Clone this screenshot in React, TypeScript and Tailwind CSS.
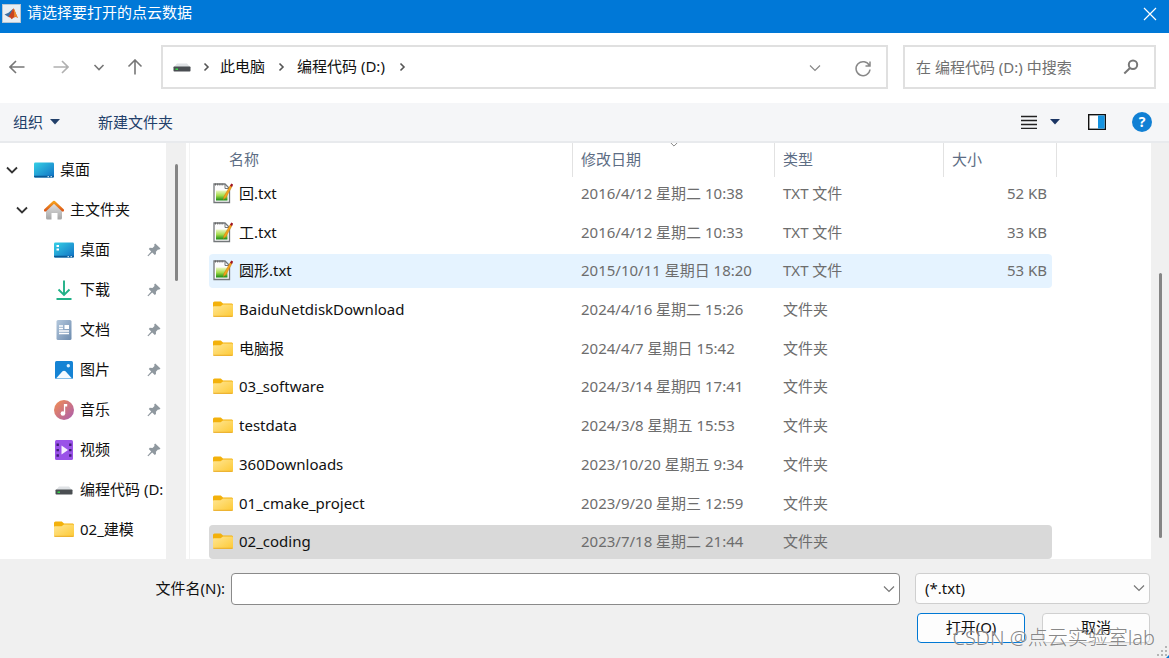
import type { ReactNode } from "react";

type Entry = {
  name: string;
  date: string;
  kind: "txt" | "folder";
  size?: string;
  state?: "hover" | "selected";
};

const entries: Entry[] = [
  { name: "回.txt", date: "2016/4/12 星期二 10:38", kind: "txt", size: "52 KB" },
  { name: "工.txt", date: "2016/4/12 星期二 10:33", kind: "txt", size: "33 KB" },
  { name: "圆形.txt", date: "2015/10/11 星期日 18:20", kind: "txt", size: "53 KB", state: "hover" },
  { name: "BaiduNetdiskDownload", date: "2024/4/16 星期二 15:26", kind: "folder" },
  { name: "电脑报", date: "2024/4/7 星期日 15:42", kind: "folder" },
  { name: "03_software", date: "2024/3/14 星期四 17:41", kind: "folder" },
  { name: "testdata", date: "2024/3/8 星期五 15:53", kind: "folder" },
  { name: "360Downloads", date: "2023/10/20 星期五 9:34", kind: "folder" },
  { name: "01_cmake_project", date: "2023/9/20 星期三 12:59", kind: "folder" },
  { name: "02_coding", date: "2023/7/18 星期二 21:44", kind: "folder", state: "selected" },
];

function MatlabIcon() {
  return (
    <svg width="19" height="19" viewBox="0 0 19 19" aria-hidden="true">
      <rect x="0.5" y="0.5" width="18" height="18" fill="#e9eef3" stroke="#b9c6d2" />
      <path d="M2.5 10.5 6.5 8.8 9 6.500 11.500 4.500 8.500 11 6.500 13Z" fill="#3d6fa3" />
      <path d="M6.300 13 8.800 9 11.300 4.500C12.500 4.500 13.500 9.500 16 14 14 12.300 12.500 12.500 9.700 15.300 8.700 13.700 7.500 13 6.300 13Z" fill="#c9431f" />
      <path d="M11.300 4.500C12.500 4.500 13.500 9.500 16 14 14.300 12.600 13.300 12.300 12 13 12.600 10 12 7.500 11.300 4.500Z" fill="#ee8a2a" />
    </svg>
  );
}

function DriveIcon() {
  return (
    <svg width="20" height="20" viewBox="0 0 20 20" aria-hidden="true">
      <path d="M5 6.5h10L18 10H2Z" fill="#dfe2e5" />
      <rect x="1.5" y="9.5" width="17" height="5" rx="0.8" fill="#4a4e52" />
      <rect x="3.5" y="11.5" width="2.5" height="1.5" fill="#37d94a" />
    </svg>
  );
}

function FolderIcon() {
  return (
    <svg width="20" height="20" viewBox="0 0 20 20" aria-hidden="true">
      <defs>
        <linearGradient id="folder" x1="0" y1="0" x2="1" y2="1">
          <stop offset="0" stopColor="#ffe694" />
          <stop offset="1" stopColor="#fdc934" />
        </linearGradient>
      </defs>
      <path d="M0 3.2C0 2.3.7 1.5 1.6 1.5h6.2L10 3.5h8.4c.9 0 1.6.7 1.6 1.6V9H0Z" fill="#f3b10b" />
      <path d="M0 7.2c0-.6.4-1 1-1h6.6L10 4.6h8.6c.8 0 1.4.6 1.4 1.4v9.6c0 .8-.6 1.4-1.4 1.4H1.4C.6 17 0 16.400 0 15.600Z" fill="url(#folder)" />
      <path d="M.3 16.300h19.400" stroke="#e6a92a" strokeWidth="0.9" />
    </svg>
  );
}

function TextFileIcon() {
  return (
    <svg width="20" height="22" viewBox="0 0 20 22" aria-hidden="true">
      <defs>
        <linearGradient id="sheet" x1="0" y1="0" x2="0" y2="1">
          <stop offset="0" stopColor="#ecf7c4" />
          <stop offset="0.5" stopColor="#a4dc4c" />
          <stop offset="1" stopColor="#188a12" />
        </linearGradient>
      </defs>
      <path d="M1 1h11l4.500 4.500v14H1Z" fill="#fdfdfd" stroke="#73777a" strokeWidth="1.300" />
      <path d="M12 1v4.500h4.500" fill="none" stroke="#73777a" />
      <path d="M2 1.500h9" stroke="#666" strokeWidth="2" strokeDasharray="1 1.200" />
      <rect x="3" y="7.500" width="11.500" height="10" fill="url(#sheet)" />
      <path d="M10.500 16.500 11 13.500 17.200 2.500 19 3.500 13 14.500Z" fill="#f5a31c" stroke="#c97d0c" strokeWidth="0.500" />
      <path d="m17 2.800 1.200-2.300 2 1-1.200 2.400Z" fill="#a01522" />
    </svg>
  );
}

function DesktopIcon({ dots }: { dots?: boolean }) {
  return (
    <svg width="20" height="20" viewBox="0 0 20 20" aria-hidden="true">
      <defs>
        <linearGradient id="screen" x1="0" y1="0" x2="1" y2="1">
          <stop offset="0" stopColor="#35d0e6" />
          <stop offset="1" stopColor="#1070c4" />
        </linearGradient>
      </defs>
      <rect y="2.500" width="20" height="15" rx="1.200" fill="url(#screen)" />
      <path d="M0 15.800h20v.7a1 1 0 0 1-1 1H1a1 1 0 0 1-1-1Z" fill="#0b5a96" />
      <path d="M13.500 16.700h1.500M16.500 16.700H18" stroke="#dff4ff" />
      {dots && <path d="M2.500 6h2.500M2.500 9.500h2.500" stroke="#fff" strokeWidth="2" />}
    </svg>
  );
}

function HomeIcon() {
  return (
    <svg width="20" height="20" viewBox="0 0 20 20" aria-hidden="true">
      <defs>
        <linearGradient id="wall" x1="0" y1="0" x2="0" y2="1">
          <stop offset="0" stopColor="#e4e4e4" />
          <stop offset="1" stopColor="#a6a6a6" />
        </linearGradient>
        <linearGradient id="roof" x1="0" y1="0" x2="0" y2="1">
          <stop offset="0" stopColor="#f6a01c" />
          <stop offset="1" stopColor="#dc5a1a" />
        </linearGradient>
      </defs>
      <path d="M2 9 10 2.500 18 9v9a1.500 1.500 0 0 1-1.500 1.500h-3V13h-6v6.500h-4A1.500 1.500 0 0 1 2 18Z" fill="url(#wall)" />
      <path d="M1.200 10.300 10 2l8.800 8.300" fill="none" stroke="url(#roof)" strokeWidth="2.600" strokeLinecap="round" strokeLinejoin="round" />
    </svg>
  );
}

function DownloadIcon() {
  return (
    <svg width="20" height="20" viewBox="0 0 20 20" fill="none" stroke="#21b187" strokeWidth="1.900" aria-hidden="true">
      <path d="M10 .5v14M4.500 9.500l5.500 5.500 5.500-5.500M2.500 19h15" />
    </svg>
  );
}

function DocumentIcon() {
  return (
    <svg width="20" height="20" viewBox="0 0 20 20" aria-hidden="true">
      <defs>
        <linearGradient id="doc" x1="0" y1="0" x2="1" y2="1">
          <stop offset="0" stopColor="#b4c8dd" />
          <stop offset="1" stopColor="#6c8bae" />
        </linearGradient>
      </defs>
      <rect x="2.500" width="15" height="20" rx="1.500" fill="url(#doc)" />
      <path d="M5 6h4M5 8.500h4M5 11h10M5 13.500h10" stroke="#fff" strokeWidth="1.300" />
      <rect x="10.500" y="5" width="4.500" height="4" fill="#fff" />
    </svg>
  );
}

function PictureIcon() {
  return (
    <svg width="20" height="20" viewBox="0 0 20 20" aria-hidden="true">
      <rect x="1" y="1" width="18" height="18" rx="1.500" fill="#1583d4" />
      <path d="M2 18.500 8.500 11.300q1.500-1.300 3 0L18 18.500Z" fill="#f4faff" />
      <circle cx="14.300" cy="5.700" r="1.700" fill="#dff2ff" />
    </svg>
  );
}

function MusicIcon() {
  return (
    <svg width="20" height="20" viewBox="0 0 20 20" aria-hidden="true">
      <defs>
        <linearGradient id="disc" x1="0" y1="0" x2="1" y2="1">
          <stop offset="0.1" stopColor="#ec8a5a" />
          <stop offset="1" stopColor="#a95bb0" />
        </linearGradient>
      </defs>
      <circle cx="10" cy="10" r="10" fill="url(#disc)" />
      <circle cx="8.900" cy="13.500" r="2.300" fill="#fff" />
      <path d="M9.900 4h3.300v2.500h-2v7H9.900Z" fill="#fff" />
    </svg>
  );
}

function VideoIcon() {
  return (
    <svg width="20" height="20" viewBox="0 0 20 20" aria-hidden="true">
      <rect x="1" width="18" height="20" rx="1.500" fill="#9a52e8" />
      <path d="M3.700 3.500v14M16.300 3.500v14" stroke="#3f1d78" strokeWidth="2.400" strokeDasharray="2.400 3" />
      <path d="M7.500 5.500 14 10l-6.500 4.500Z" fill="#f7f0ff" />
    </svg>
  );
}

function PinIcon() {
  return (
    <svg width="14" height="14" viewBox="0 0 14 14" aria-hidden="true">
      <path d="M8.200.5 13.500 5.500 12 6.700 11 6.600 8.900 8.700 9 11 7.800 12 5.200 9.400 1.300 13.200.4 12.700 4.200 8.500 1.800 6 2.800 4.800 5.500 5 7.500 2.900 7.200 1.500Z" fill="#8f989f" />
    </svg>
  );
}

function Chevron({
  direction,
  size = 12,
  className = "text-[#777]",
  weight = 1.2,
}: {
  direction: "down" | "right";
  size?: number;
  className?: string;
  weight?: number;
}) {
  return (
    <svg width={size} height={size} viewBox="0 0 12 12" fill="none" stroke="currentColor" strokeWidth={weight} className={className} aria-hidden="true">
      <path d={direction === "down" ? "M1 3.500 6 8.500 11 3.500" : "M4.500 2.500 8 6 4.500 9.500"} />
    </svg>
  );
}

function NavButton({ label, faded, path }: { label: string; faded?: boolean; path: string }) {
  return (
    <button type="button" aria-label={label} className={`flex w-4 justify-center ${faded ? "text-[#b0b0b0]" : "text-[#777]"}`}>
      <svg width="16" height="16" viewBox="0 0 16 16" fill="none" stroke="currentColor" strokeWidth="1.600" className="shrink-0">
        <path d={path} />
      </svg>
    </button>
  );
}

function TreeItem({
  label,
  icon,
  indent,
  open,
  pinned,
}: {
  label: string;
  icon: ReactNode;
  indent: string;
  open?: boolean;
  pinned?: boolean;
}) {
  return (
    <li>
      <a href="#" className={`flex h-10 items-center whitespace-nowrap ${indent}`}>
        <span className="w-7 shrink-0">
          {open && <Chevron direction="down" className="text-[#333]" weight={1.8} />}
        </span>
        <span className="mr-1.5 shrink-0">{icon}</span>
        <span className="overflow-hidden pb-0.5">{label}</span>
        {pinned && (
          <span className="mr-0.5 ml-auto">
            <PinIcon />
          </span>
        )}
      </a>
    </li>
  );
}

function FileRow({ entry }: { entry: Entry }) {
  const fill =
    entry.state === "hover" ? "bg-[#e5f3ff]" : entry.state === "selected" ? "bg-[#d9d9d9]" : "";

  return (
    <tr className="text-[#6d6d6d]">
      <td className="p-0 align-top">
        <div className={`flex h-[34px] items-center gap-1.5 rounded-l-sm pl-1 text-[#111] ${fill}`}>
          {entry.kind === "txt" ? <TextFileIcon /> : <FolderIcon />}
          <span className="pb-0.5">{entry.name}</span>
        </div>
      </td>
      <td className="p-0 align-top">
        <div className={`flex h-[34px] items-center pb-0.5 pl-2 ${fill}`}>{entry.date}</div>
      </td>
      <td className="p-0 align-top">
        <div className={`flex h-[34px] items-center pb-0.5 pl-2 ${fill}`}>
          {entry.kind === "txt" ? "TXT 文件" : "文件夹"}
        </div>
      </td>
      <td className="p-0 align-top">
        <div className={`mr-[5px] flex h-[34px] items-center justify-end rounded-r-sm pr-[5px] pb-0.5 ${fill}`}>
          {entry.size}
        </div>
      </td>
    </tr>
  );
}

export default function App() {
  return (
    <div className="flex h-screen flex-col overflow-hidden bg-[#f0f0f0] font-['Noto_Sans','Noto_Sans_CJK_SC',sans-serif] text-[15px] leading-5 text-[#111]">
      <header className="flex h-[33px] shrink-0 items-center bg-[#0078d7] pr-3 pb-[6px] pl-0.5 text-white">
        <MatlabIcon />
        <h1 className="ml-1.5 pb-[3px]">请选择要打开的点云数据</h1>
        <button type="button" aria-label="关闭" className="ml-auto">
          <svg width="14" height="14" viewBox="0 0 14 14" stroke="currentColor" strokeWidth="1.200">
            <path d="M1 1 13 13M13 1 1 13" />
          </svg>
        </button>
      </header>

      <nav className="flex h-[70px] shrink-0 items-center bg-white pr-[13px] pb-0.5 pl-[9px]">
        <div className="mr-[18px] flex items-center">
          <NavButton label="后退" path="M15.500 8H1M7 2 1 8l6 6" />
          <span className="w-7" />
          <NavButton label="前进" faded path="M.5 8H15M9 2l6 6-6 6" />
          <span className="w-[22px]" />
          <NavButton label="最近浏览的位置" path="M3.500 6 8 10.500 12.500 6" />
          <span className="w-5" />
          <NavButton label="上移" path="M8 15.500V1M1.500 7.500 8 1l6.500 6.500" />
        </div>
        <div className="flex h-11 flex-1 items-center border-2 border-[#e0e0e0] pr-[14px] pl-[9px]">
          <DriveIcon />
          <Chevron direction="right" className="mx-2 text-[#555]" weight={1.6} />
          <a href="#" className="pb-0.5">此电脑</a>
          <Chevron direction="right" className="mx-[10px] text-[#555]" weight={1.6} />
          <a href="#" className="pb-0.5">编程代码 (D:)</a>
          <Chevron direction="right" className="mx-[11px] text-[#555]" weight={1.6} />
          <button type="button" aria-label="以前的位置" className="ml-auto pt-0.5">
            <Chevron direction="down" className="text-[#888]" />
          </button>
          <button type="button" aria-label="刷新" className="ml-[33px] pt-1">
            <svg width="18" height="18" viewBox="0 0 18 18" fill="none" stroke="#888" strokeWidth="1.500">
              <path d="M15.300 5.500A7 7 0 1 0 16 9.500M16 1.500v4.500h-4.500" />
            </svg>
          </button>
        </div>
        <label className="ml-[15px] flex h-11 w-[253px] items-center border-2 border-[#e0e0e0] pr-[15px] pl-[11px]">
          <input
            type="search"
            aria-label="搜索"
            placeholder="在 编程代码 (D:) 中搜索"
            className="min-w-0 flex-1 outline-none placeholder:text-[#707070]"
          />
          <svg width="16" height="16" viewBox="0 0 16 16" fill="none" stroke="#777" strokeWidth="2" aria-hidden="true">
            <circle cx="10" cy="5.800" r="4.200" />
            <path d="M7 9 1.300 14.500" />
          </svg>
        </label>
      </nav>

      <div className="flex h-10 shrink-0 items-center border-b-2 border-[#e8eaed] bg-[#f5f6f8] pr-[17px] pl-[13px] text-[#22406a]">
        <button type="button" className="flex items-center gap-1.5">
          组织
          <svg width="12" height="12" viewBox="0 0 12 12" aria-hidden="true">
            <path d="M1 3h10L6 8.500Z" fill="#22406a" />
          </svg>
        </button>
        <button type="button" className="ml-[37px]">新建文件夹</button>
        <button type="button" aria-label="列表视图" className="ml-auto">
          <svg width="16" height="14" viewBox="0 0 16 14" stroke="#222" strokeWidth="1.300">
            <path d="M0 1.500h16M0 5.500h16M0 9.500h16M0 13.300h16" />
          </svg>
        </button>
        <button type="button" aria-label="更多视图" className="ml-3">
          <svg width="12" height="12" viewBox="0 0 12 12">
            <path d="M1 3h10L6 8.500Z" fill="#1b3564" />
          </svg>
        </button>
        <button type="button" aria-label="预览窗格" className="ml-[27px]">
          <svg width="18" height="16" viewBox="0 0 18 16">
            <rect x="0.700" y="0.700" width="16.600" height="14.600" fill="#fff" stroke="#111" strokeWidth="1.400" />
            <rect x="10" y="1.400" width="6.600" height="13.200" fill="#1593e0" />
          </svg>
        </button>
        <button
          type="button"
          aria-label="帮助"
          className="ml-[26px] flex size-5 items-center justify-center rounded-full bg-[#1180d4] text-sm font-bold text-white"
        >
          ?
        </button>
      </div>

      <main className="flex min-h-0 flex-1 bg-white">
        <aside className="w-[166px] overflow-hidden pt-[7px] pr-[3px]">
          <ul>
            <TreeItem label="桌面" icon={<DesktopIcon />} indent="pl-[6px]" open />
            <TreeItem label="主文件夹" icon={<HomeIcon />} indent="pl-[16px]" open />
            <TreeItem label="桌面" icon={<DesktopIcon dots />} indent="pl-[26px]" pinned />
            <TreeItem label="下载" icon={<DownloadIcon />} indent="pl-[26px]" pinned />
            <TreeItem label="文档" icon={<DocumentIcon />} indent="pl-[26px]" pinned />
            <TreeItem label="图片" icon={<PictureIcon />} indent="pl-[26px]" pinned />
            <TreeItem label="音乐" icon={<MusicIcon />} indent="pl-[26px]" pinned />
            <TreeItem label="视频" icon={<VideoIcon />} indent="pl-[26px]" pinned />
            <TreeItem label="编程代码 (D:)" icon={<DriveIcon />} indent="pl-[26px]" />
            <TreeItem label="02_建模" icon={<FolderIcon />} indent="pl-[26px]" />
          </ul>
        </aside>
        <div className="flex w-5 justify-center bg-[#f0f0f0] pt-[21px]">
          <div className="h-[117px] w-[3px] rounded-full bg-[#858585]" />
        </div>
        <section className="ml-[3px] min-w-0 flex-1 overflow-hidden border-l border-[#f3f3f3] pr-[94px] pl-[19px]">
          <table className="h-[calc(100%+5px)] w-full table-fixed border-separate border-spacing-0 whitespace-nowrap">
            <colgroup>
              <col />
              <col className="w-[202px]" />
              <col className="w-[169px]" />
              <col className="w-[113px]" />
            </colgroup>
            <thead className="text-left text-[#5d6d84]">
              <tr className="h-[34px]">
                <th className="border-r border-[#e2e2e2] p-0 pb-0.5 pl-5 font-normal">名称</th>
                <th className="relative border-r border-[#e2e2e2] p-0 pb-0.5 pl-2 font-normal">
                  修改日期
                  <span className="absolute top-0 left-1/2 -translate-x-1/2">
                    <Chevron direction="down" size={10} className="-mt-1 text-[#888]" />
                  </span>
                </th>
                <th className="border-r border-[#e2e2e2] p-0 pb-0.5 pl-2 font-normal">类型</th>
                <th className="border-r border-[#e2e2e2] p-0 pb-0.5 pl-2 font-normal">大小</th>
              </tr>
            </thead>
            <tbody>
              {entries.map((entry) => (
                <FileRow key={entry.name} entry={entry} />
              ))}
            </tbody>
          </table>
        </section>
        <div className="flex w-[18px] flex-col items-center bg-[#f0f0f0] pt-[130px]">
          <div className="h-[265px] w-[3px] rounded-full bg-[#858585]" />
        </div>
      </main>

      <footer className="relative h-[99px] shrink-0 pt-[14px] pr-[19px]">
        <div className="flex items-start">
          <label htmlFor="filename" className="w-[231px] pr-1.5 text-right leading-[30px]">
            文件名(N):
          </label>
          <div className="flex h-8 flex-1 items-center rounded-sm border border-[#8a8a8a] bg-white pr-1">
            <input id="filename" type="text" className="min-w-0 flex-1 px-2 outline-none" />
            <button type="button" aria-label="历史记录">
              <Chevron direction="down" />
            </button>
          </div>
          <div className="relative ml-[15px] w-[235px]">
            <select
              aria-label="文件类型"
              className="h-[31px] w-full appearance-none rounded-sm border border-[#cfcfcf] bg-[#fdfdfd] pb-0.5 pl-[9px]"
            >
              <option>(*.txt)</option>
            </select>
            <span className="pointer-events-none absolute top-[9px] right-[5px]">
              <Chevron direction="down" />
            </span>
          </div>
        </div>
        <div className="mt-2 flex justify-end gap-[17px]">
          <button type="button" className="h-[30px] w-[108px] rounded border border-[#0078d4] bg-[#fdfdfd] pb-0.5">
            打开(O)
          </button>
          <button type="button" className="h-[30px] w-[108px] rounded border border-[#d0d0d0] bg-[#fdfdfd] pb-0.5">
            取消
          </button>
        </div>
        <p className="pointer-events-none absolute right-[14px] bottom-2 text-[20px] leading-6 font-light text-[#777]/90 [text-shadow:0_0_1px_#fff]">
          CSDN @点云实验室lab
        </p>
        <svg width="12" height="12" viewBox="0 0 12 12" fill="#b5b5b5" className="absolute right-0 bottom-0" aria-hidden="true">
          <path d="M8 0h2v2H8ZM4 4h2v2H4ZM8 4h2v2H8ZM0 8h2v2H0ZM4 8h2v2H4ZM8 8h2v2H8Z" />
          <path d="M9 12 12 9v3Z" fill="#0078d7" />
        </svg>
      </footer>
    </div>
  );
}
